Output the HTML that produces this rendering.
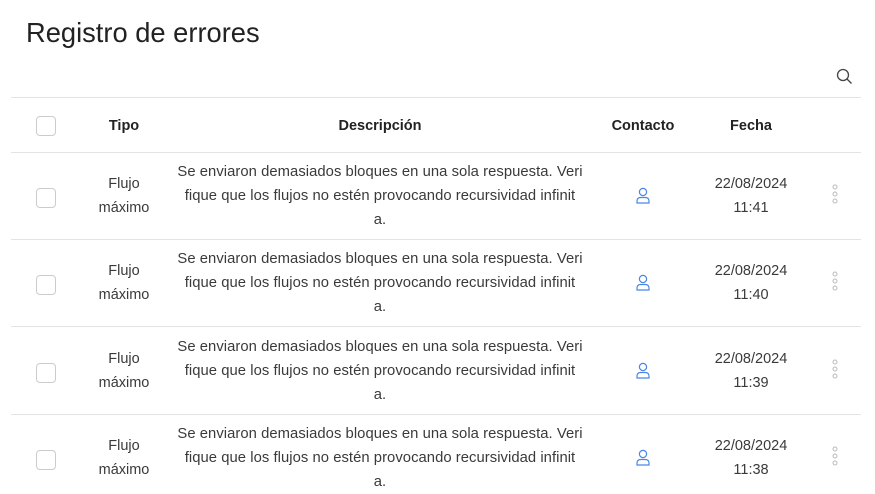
<!DOCTYPE html>
<html><head><meta charset="utf-8"><style>
body{margin:0;background:#fff;font-family:"Liberation Sans",sans-serif;color:#3a3a3a;width:875px;height:491px;overflow:hidden;position:relative}
h1{position:absolute;left:26px;top:17px;margin:0;font-weight:400;font-size:27.3px;color:#222}
.line{position:absolute;left:11px;width:850px;height:1px;background:#e4e4e4}
.cb{position:absolute;left:36px;width:20px;height:20px;border:1px solid #ccc;border-radius:4px;box-sizing:border-box}
.c{position:absolute;text-align:center;font-size:14.5px;line-height:24px}
.d{font-size:14.8px;letter-spacing:0.05px}
.h{font-weight:bold;color:#222}
</style></head><body>
<h1>Registro de errores</h1>
<svg style="position:absolute;left:836px;top:68px" width="17" height="17" viewBox="0 0 17 17"><circle cx="7" cy="7" r="5.5" fill="none" stroke="#444" stroke-width="1.3"/><line x1="11" y1="11" x2="15.5" y2="15.5" stroke="#444" stroke-width="1.3"/></svg>
<div class="line" style="top:97px"></div>
<div class="cb" style="top:116px"></div>
<div class="c h" style="left:84px;width:80px;top:114px">Tipo</div>
<div class="c h" style="left:230px;width:300px;top:114px">Descripción</div>
<div class="c h" style="left:593px;width:100px;top:114px">Contacto</div>
<div class="c h" style="left:701px;width:100px;top:114px">Fecha</div>
<div class="line" style="top:152px"></div>

<div id="rows"></div>
<script>
var t=[["11:41",152],["11:40",239],["11:39",327],["11:38",414]];
var h="";
t.forEach(function(r){var y=r[1];
h+='<div class="cb" style="top:'+(y+36)+'px"></div>'+
'<div class="c" style="left:84px;width:80px;top:'+(y+20)+'px">Flujo<br>máximo</div>'+
'<div class="c d" style="left:150px;width:460px;top:'+(y+8)+'px">Se enviaron demasiados bloques en una sola respuesta. Veri<br>fique que los flujos no estén provocando recursividad infinit<br>a.</div>'+
'<svg style="position:absolute;left:636px;top:'+(y+35)+'px" width="14" height="17" viewBox="0 0 14 17"><circle cx="7" cy="5" r="3.6" fill="none" stroke="#4a86e8" stroke-width="1.2"/><path d="M1 16 V14 Q1 10.5 5 10.5 H9 Q13 10.5 13 14 V16 Z" fill="none" stroke="#4a86e8" stroke-width="1.2"/></svg>'+
'<div class="c" style="left:701px;width:100px;top:'+(y+20)+'px">22/08/2024<br>'+r[0]+'</div>'+
'<svg style="position:absolute;left:831px;top:'+(y+32)+'px" width="8" height="22" viewBox="0 0 8 22"><circle cx="4" cy="3" r="2" fill="none" stroke="#bbb"/><circle cx="4" cy="10" r="2" fill="none" stroke="#bbb"/><circle cx="4" cy="17" r="2" fill="none" stroke="#bbb"/></svg>';
if(y<414)h+='<div class="line" style="top:'+(y+87)+'px"></div>';
});
document.getElementById("rows").innerHTML=h;
</script>
</body></html>
